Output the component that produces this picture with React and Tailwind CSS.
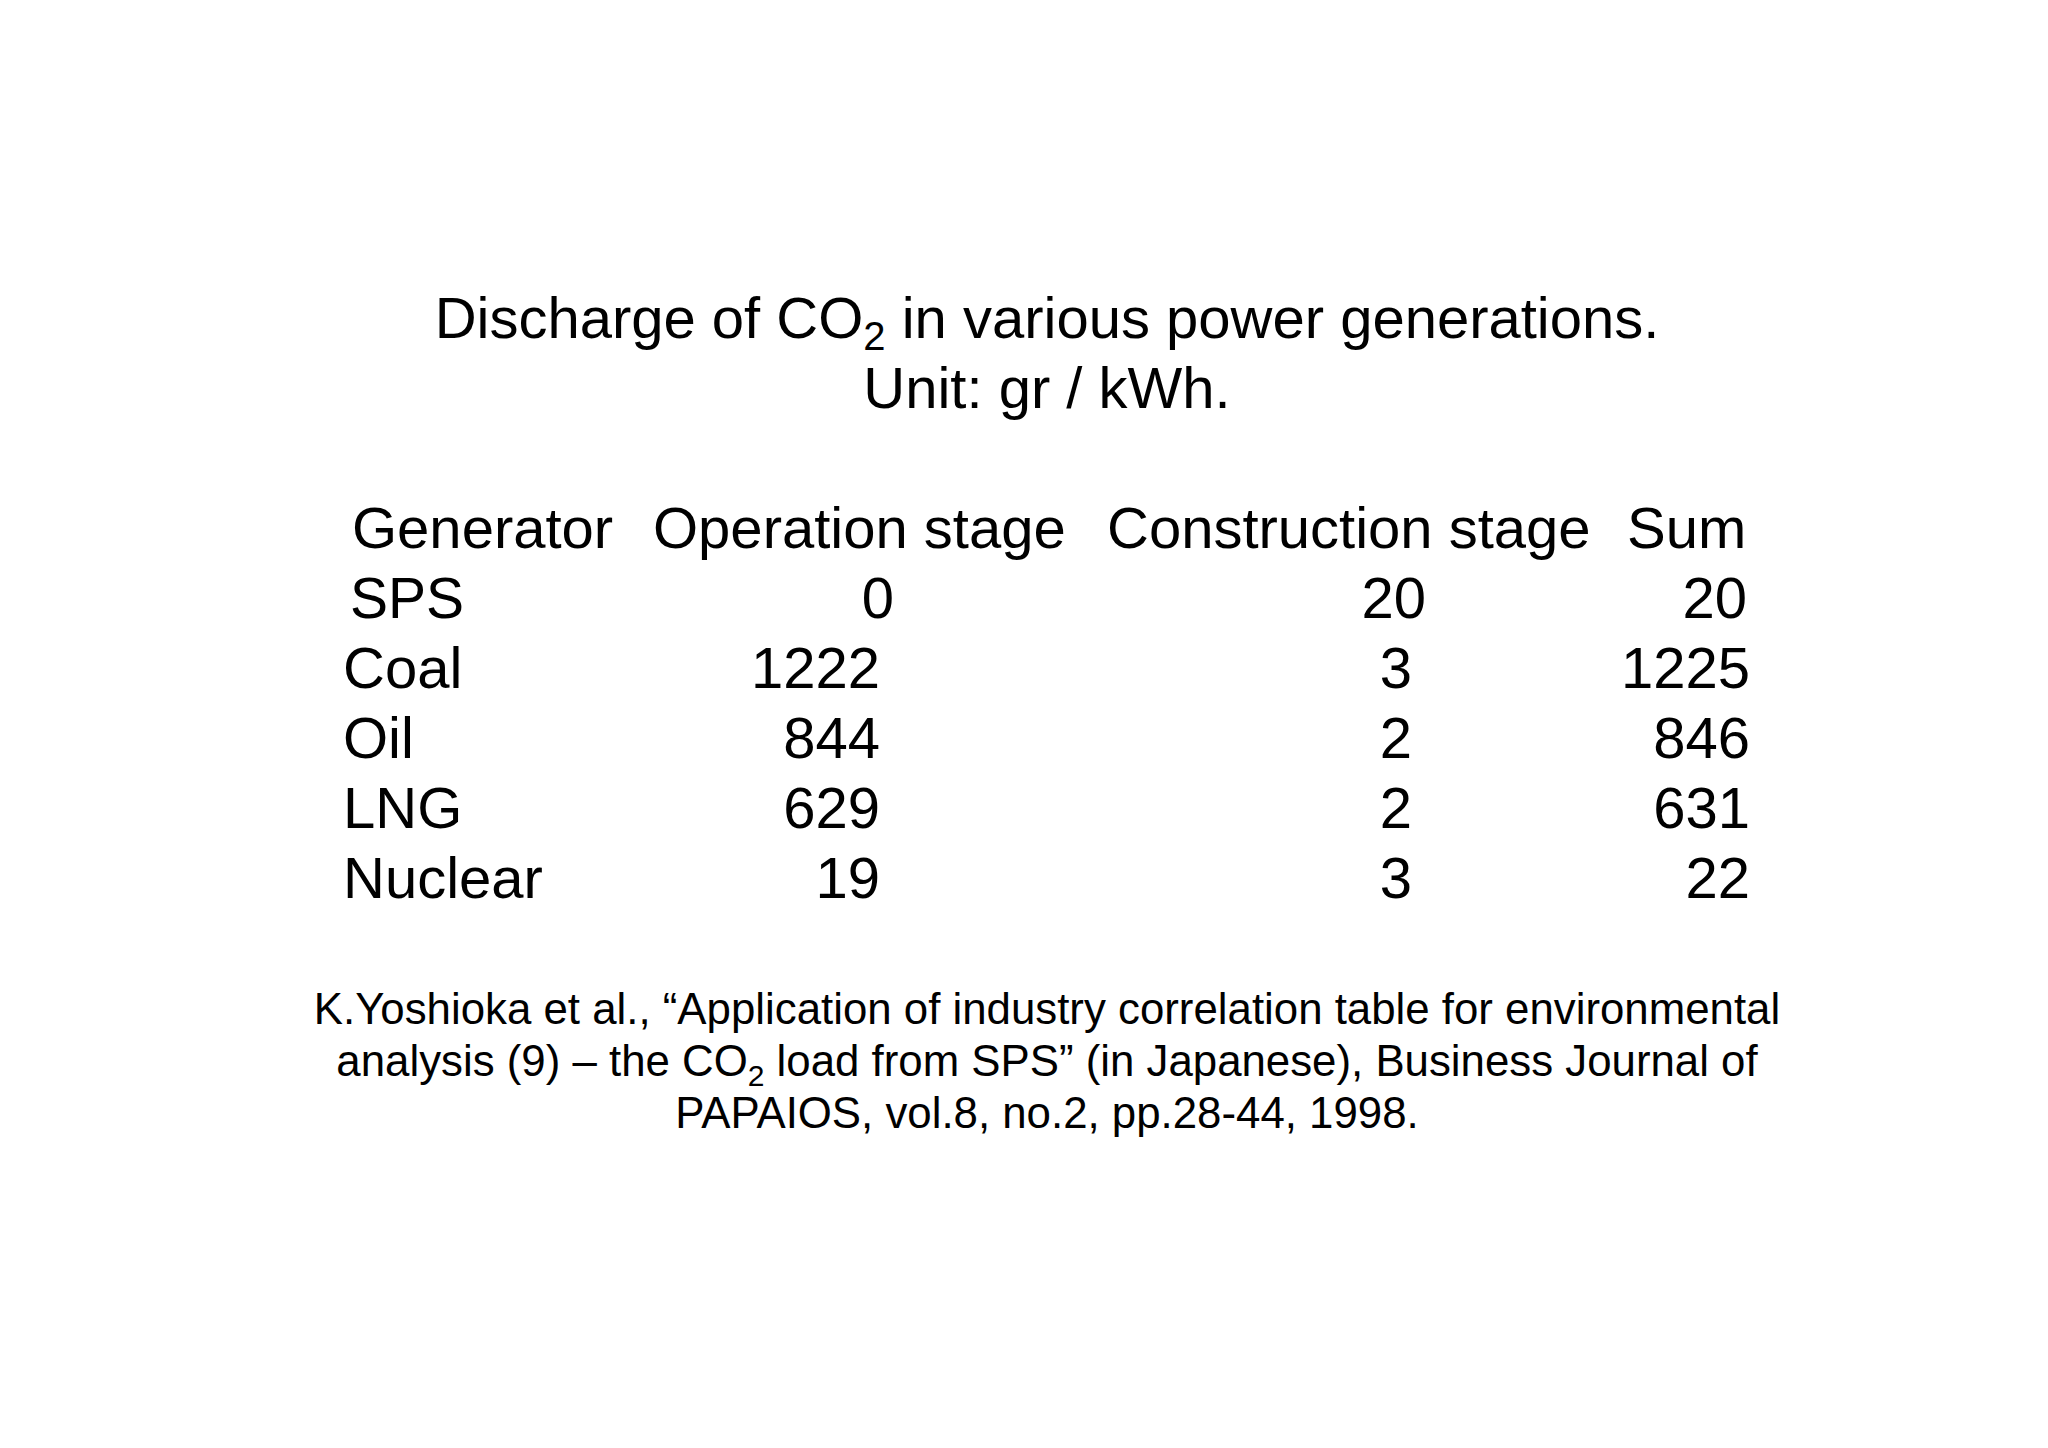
const ROWS = [
  { name: 'Coal', op: '1222', con: '3', sum: '1225' },
  { name: 'Oil', op: '844', con: '2', sum: '846' },
  { name: 'LNG', op: '629', con: '2', sum: '631' },
  { name: 'Nuclear', op: '19', con: '3', sum: '22' },
]

const row = 'grid grid-cols-[300px_457px_520px_140px] h-[70px] leading-[70px]'

export default function App() {
  return (
    <div className="min-h-screen bg-white text-black font-['Liberation_Sans',Arial,sans-serif]">
      <div className="pl-[46px] pt-[283px] pb-[200px] flex flex-col items-center">
        {/* Title */}
        <div className="text-[58px] leading-[70px] text-center whitespace-nowrap">
          <p>
            Discharge of CO<sub className="text-[40px] -bottom-[12px]">2</sub> in various power generations.
          </p>
          <p>Unit: gr / kWh.</p>
        </div>

        {/* Table */}
        <div className="mt-[70px] self-start ml-[297px] text-[58px] whitespace-nowrap">
          <div className={row}>
            <div className="pl-[9px]">Generator</div>
            <div className="pl-[10px]">Operation stage</div>
            <div className="pl-[7px]">Construction stage</div>
            <div className="pl-[7px]">Sum</div>
          </div>
          <div className={row}>
            <div className="pl-[7px] text-[57px]">SPS</div>
            <div className="text-right pr-[206px]">0</div>
            <div className="text-right pr-[194px]">20</div>
            <div className="text-right pr-[13px]">20</div>
          </div>
          {ROWS.map(r => (
            <div key={r.name} className={row}>
              <div>{r.name}</div>
              <div className="text-right pr-[220px]">{r.op}</div>
              <div className="text-right pr-[208px]">{r.con}</div>
              <div className="text-right pr-[10px]">{r.sum}</div>
            </div>
          ))}
        </div>

        {/* Reference */}
        <p className="mt-[70px] text-[43.8px] leading-[52px] text-center whitespace-nowrap">
          K.Yoshioka et al., “Application of industry correlation table for environmental
          <br />
          analysis (9) – the CO<sub className="text-[30px] -bottom-[10px]">2</sub> load from SPS” (in Japanese), Business Journal of
          <br />
          PAPAIOS, vol.8, no.2, pp.28-44, 1998.
        </p>
      </div>
    </div>
  )
}
